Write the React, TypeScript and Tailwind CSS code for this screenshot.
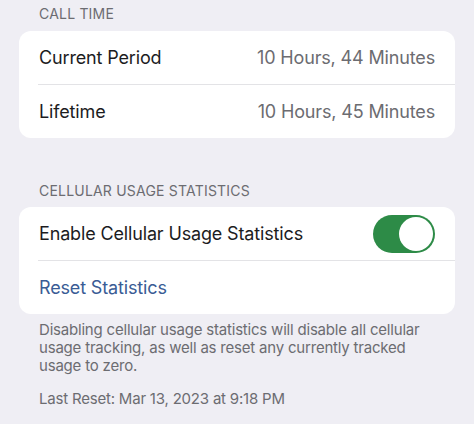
export default function App() {
  return (
    <div
      className="min-h-[424px] w-full bg-[#efeef4] pt-[5px] antialiased"
      style={{ fontFamily: 'Inter, "Noto Sans", sans-serif' }}
    >
      {/* Call time */}
      <div className="px-[39px] text-[14px] leading-[18px] tracking-[0.2px] text-[#6c6c71]">CALL TIME</div>
      <div className="mx-[19px] mt-[8px] w-[436px] rounded-[12px] bg-white">
        <Row label="Current Period" value="10 Hours, 44 Minutes" />
        <div className="ml-[19px] h-px bg-[#e3e3e6]" />
        <Row label="Lifetime" value="10 Hours, 45 Minutes" />
      </div>

      {/* Cellular usage statistics */}
      <div className="mt-[44px] px-[39px] text-[14px] leading-[18px] tracking-[0.2px] text-[#6c6c71]">
        CELLULAR USAGE STATISTICS
      </div>
      <div className="mx-[19px] mt-[7px] w-[436px] rounded-[12px] bg-white">
        <div className="flex h-[53px] items-center justify-between pl-[20px] pr-[20px]">
          <span className="text-[18px] tracking-[-0.15px] text-[#1c1c1e]">Enable Cellular Usage Statistics</span>
          <Toggle />
        </div>
        <div className="ml-[19px] h-px bg-[#e3e3e6]" />
        <div className="flex h-[53px] items-center pl-[20px]">
          <span className="text-[18px] tracking-[-0.15px] text-[#3a5c95]">Reset Statistics</span>
        </div>
      </div>

      <div className="whitespace-nowrap px-[39px] pt-[7px] text-[15px] leading-[18px] tracking-[-0.2px] text-[#6c6c71]">
        <p>
          Disabling cellular usage statistics will disable all cellular
          <br />
          usage tracking, as well as reset any currently tracked
          <br />
          usage to zero.
        </p>
        <p className="mt-[15px]">Last Reset: Mar 13, 2023 at 9:18 PM</p>
      </div>
    </div>
  );
}

function Row({ label, value }: { label: string; value: string }) {
  return (
    <div className="flex h-[53px] items-center justify-between pl-[20px] pr-[20px]">
      <span className="text-[18px] tracking-[-0.15px] text-[#1c1c1e]">{label}</span>
      <span className="text-[18px] tracking-[-0.15px] text-[#6c6c71]">{value}</span>
    </div>
  );
}

function Toggle() {
  return (
    <div className="flex h-[38px] w-[62px] items-center justify-end rounded-full bg-[#2d8b47] p-[2px]">
      <div className="h-[34px] w-[34px] rounded-full bg-white" />
    </div>
  );
}
